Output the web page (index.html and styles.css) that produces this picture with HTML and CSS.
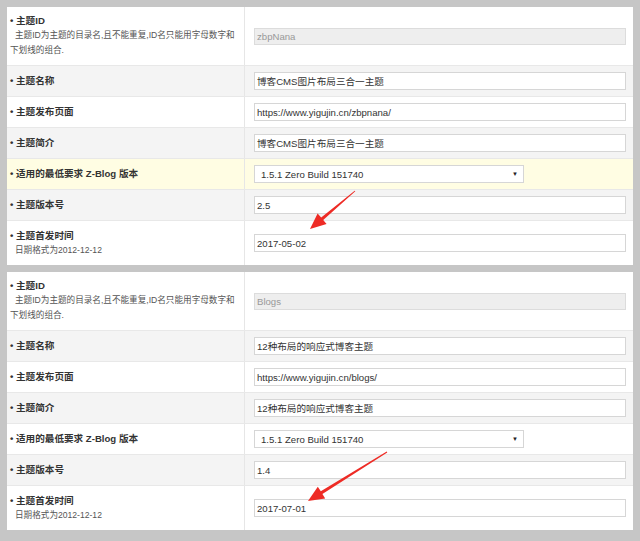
FILE: index.html
```html
<!DOCTYPE html>
<html lang="zh-CN">
<head>
<meta charset="utf-8">
<title>主题设置</title>
<link rel="stylesheet" href="styles.css">
</head>
<body>
<div class="page">
  <div class="panel">
    <div class="row row-id">
      <div class="cell-label">
        <div class="label">• 主题ID</div>
        <div class="desc">主题ID为主题的目录名,且不能重复,ID名只能用字母数字和<br>下划线的组合.</div>
      </div>
      <div class="cell-field"><input class="field" value="zbpNana" disabled></div>
    </div>
    <div class="row">
      <div class="cell-label"><div class="label">• 主题名称</div></div>
      <div class="cell-field"><input class="field" value="博客CMS图片布局三合一主题"></div>
    </div>
    <div class="row">
      <div class="cell-label"><div class="label">• 主题发布页面</div></div>
      <div class="cell-field"><input class="field" value="https://www.yigujin.cn/zbpnana/"></div>
    </div>
    <div class="row">
      <div class="cell-label"><div class="label">• 主题简介</div></div>
      <div class="cell-field"><input class="field" value="博客CMS图片布局三合一主题"></div>
    </div>
    <div class="row highlight">
      <div class="cell-label"><div class="label">• 适用的最低要求 Z-Blog 版本</div></div>
      <div class="cell-field"><div class="select"><span>1.5.1 Zero Build 151740</span><span class="caret">▼</span></div></div>
    </div>
    <div class="row">
      <div class="cell-label"><div class="label">• 主题版本号</div></div>
      <div class="cell-field"><input class="field" value="2.5"></div>
    </div>
    <div class="row row-date">
      <div class="cell-label">
        <div class="label">• 主题首发时间</div>
        <div class="desc">日期格式为2012-12-12</div>
      </div>
      <div class="cell-field"><input class="field" value="2017-05-02"></div>
    </div>
  </div>

  <div class="panel">
    <div class="row row-id">
      <div class="cell-label">
        <div class="label">• 主题ID</div>
        <div class="desc">主题ID为主题的目录名,且不能重复,ID名只能用字母数字和<br>下划线的组合.</div>
      </div>
      <div class="cell-field"><input class="field" value="Blogs" disabled></div>
    </div>
    <div class="row">
      <div class="cell-label"><div class="label">• 主题名称</div></div>
      <div class="cell-field"><input class="field" value="12种布局的响应式博客主题"></div>
    </div>
    <div class="row">
      <div class="cell-label"><div class="label">• 主题发布页面</div></div>
      <div class="cell-field"><input class="field" value="https://www.yigujin.cn/blogs/"></div>
    </div>
    <div class="row">
      <div class="cell-label"><div class="label">• 主题简介</div></div>
      <div class="cell-field"><input class="field" value="12种布局的响应式博客主题"></div>
    </div>
    <div class="row">
      <div class="cell-label"><div class="label">• 适用的最低要求 Z-Blog 版本</div></div>
      <div class="cell-field"><div class="select"><span>1.5.1 Zero Build 151740</span><span class="caret">▼</span></div></div>
    </div>
    <div class="row">
      <div class="cell-label"><div class="label">• 主题版本号</div></div>
      <div class="cell-field"><input class="field" value="1.4"></div>
    </div>
    <div class="row row-date">
      <div class="cell-label">
        <div class="label">• 主题首发时间</div>
        <div class="desc">日期格式为2012-12-12</div>
      </div>
      <div class="cell-field"><input class="field" value="2017-07-01"></div>
    </div>
  </div>

  <svg class="arrows" width="640" height="541" viewBox="0 0 640 541">
    <polygon fill="#ee2b25" points="355.3,191.3 323.2,219.9 326.6,224 310,229 317.6,213.6 321.2,217.6 354.7,190.7"/>
    <polygon fill="#ee2b25" points="387.3,452.4 322.4,493.9 325.2,498.4 308,501 317.8,486.8 320.8,491.3 386.7,451.6"/>
  </svg>
</div>
</body>
</html>
```

FILE: styles.css
```css
* { box-sizing: border-box; }

html, body {
  margin: 0;
  padding: 0;
  background: #c6c6c6;
}

.page {
  position: relative;
  width: 640px;
  height: 541px;
  padding: 7px;
  display: flex;
  flex-direction: column;
  gap: 7px;
  font-family: "Liberation Sans", "Noto Sans CJK SC", sans-serif;
  color: #333;
}

.panel {
  width: 626px;
  background: #fff;
  display: flex;
  flex-direction: column;
}

.row {
  display: grid;
  grid-template-columns: 238px 388px;
  height: 31px;
  border-bottom: 1px solid #e8e8e8;
  background: #fff;
}

.row:nth-child(even) {
  background: #f4f4f4;
}

.row.highlight {
  background: #fffde3;
}

.row-id { height: 59px; }
.row-date { height: 44px; border-bottom: none; }

.cell-label {
  border-right: 1px solid #e6e6e6;
  padding: 0 4px 0 3px;
  display: flex;
  flex-direction: column;
  justify-content: center;
}

.label {
  font-size: 9.6px;
  font-weight: bold;
  line-height: 14px;
  color: #333;
  white-space: nowrap;
}

.desc {
  font-size: 8.6px;
  line-height: 15px;
  color: #555;
  text-indent: 5px;
  white-space: nowrap;
}

.cell-field {
  padding: 0 0 0 9px;
  display: flex;
  align-items: center;
}

.field {
  width: 372px;
  height: 18px;
  margin: 0;
  border: 1px solid #d6d6d6;
  padding: 0 2px;
  background: #fff;
  font-family: "Liberation Sans", "Noto Sans CJK SC", sans-serif;
  font-size: 9.6px;
  color: #333;
  outline: none;
}

.field:disabled {
  height: 17px;
  background: #eeeeee;
  color: #999;
  border-color: #dcdcdc;
}

.select {
  width: 270px;
  height: 18px;
  border: 1px solid #d6d6d6;
  background: #fff;
  padding: 0 5px 0 6px;
  display: flex;
  align-items: center;
  justify-content: space-between;
  font-size: 9.6px;
  color: #333;
}

.caret {
  font-size: 6px;
  color: #222;
}

.arrows {
  position: absolute;
  left: 0;
  top: 0;
  pointer-events: none;
}
```
